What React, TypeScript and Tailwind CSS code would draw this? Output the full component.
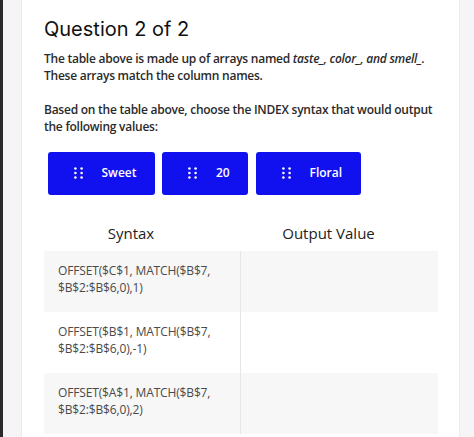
const chips = [
  { label: "Sweet", w: "w-[107px]" },
  { label: "20", w: "w-[86px]" },
  { label: "Floral", w: "w-[105px]" },
]

const rows = [
  { syntax: "OFFSET($C$1, MATCH($B$7, $B$2:$B$6,0),1)", shaded: true },
  { syntax: "OFFSET($B$1, MATCH($B$7, $B$2:$B$6,0),-1)", shaded: false },
  { syntax: "OFFSET($A$1, MATCH($B$7, $B$2:$B$6,0),2)", shaded: true },
]

function Grip() {
  return (
    <svg width="9" height="12" viewBox="0 0 9 12" className="shrink-0" fill="white">
      <circle cx="1.4" cy="1.5" r="1.3" />
      <circle cx="7.6" cy="1.5" r="1.3" />
      <circle cx="1.4" cy="6" r="1.3" />
      <circle cx="7.6" cy="6" r="1.3" />
      <circle cx="1.4" cy="10.5" r="1.3" />
      <circle cx="7.6" cy="10.5" r="1.3" />
    </svg>
  )
}

export default function App() {
  return (
    <div className="flex h-[437px] w-[474px] overflow-hidden bg-[#f6f4f7]">
      <div className="w-[3px] shrink-0 bg-[#2a2a2a]" />

      {/* Question card */}
      <div className="ml-[18px] w-[439px] shrink-0 border-x border-[#ececec] bg-white px-[22px] pt-[15px] font-['Open_Sans',sans-serif]">
        <h1 className="font-['Inter',sans-serif] text-[20px] leading-[28px] font-normal text-[#111]">
          Question 2 of 2
        </h1>

        <p className="mt-[6.5px] text-[12px] leading-[17.5px] font-semibold tracking-[-0.25px] text-[#2a2a2a]">
          The table above is made up of arrays named{" "}
          <i>taste_, color_, and smell_.</i>
          <br />
          These arrays match the column names.
        </p>

        <p className="mt-[16px] -mr-[4px] text-[12px] leading-[17.5px] font-semibold tracking-[-0.25px] text-[#2a2a2a]">
          Based on the table above, choose the INDEX syntax that would output the following values:
        </p>

        {/* Draggable answers */}
        <div className="mt-[16px] ml-[3.5px] flex gap-[7.5px]">
          {chips.map((c) => (
            <div
              key={c.label}
              className={`${c.w} flex h-[43.5px] items-center gap-[19px] rounded-[3px] bg-[#1111f0] pl-[26px] text-[12px] font-semibold text-white`}
            >
              <Grip />
              {c.label}
            </div>
          ))}
        </div>

        {/* Table */}
        <div className="mt-[27px] w-[394px]">
          <div className="flex pb-[7px] text-[15px] leading-[22px] text-[#222]">
            <div className="w-[197px] pr-[23px] text-center">Syntax</div>
            <div className="flex-1 pr-[22px] text-center">Output Value</div>
          </div>
          {rows.map((r) => (
            <div key={r.syntax} className={`flex h-[61px] ${r.shaded ? "bg-[#f7f7f7]" : "bg-white"}`}>
              <div className="w-[197px] border-r border-[#e6e6e6] pt-[12px] pr-[8px] pl-[14px] text-[12px] leading-[16.7px] tracking-[-0.15px] text-[#4a4a4a]">
                {r.syntax}
              </div>
              <div className="flex-1" />
            </div>
          ))}
        </div>
      </div>
    </div>
  )
}
